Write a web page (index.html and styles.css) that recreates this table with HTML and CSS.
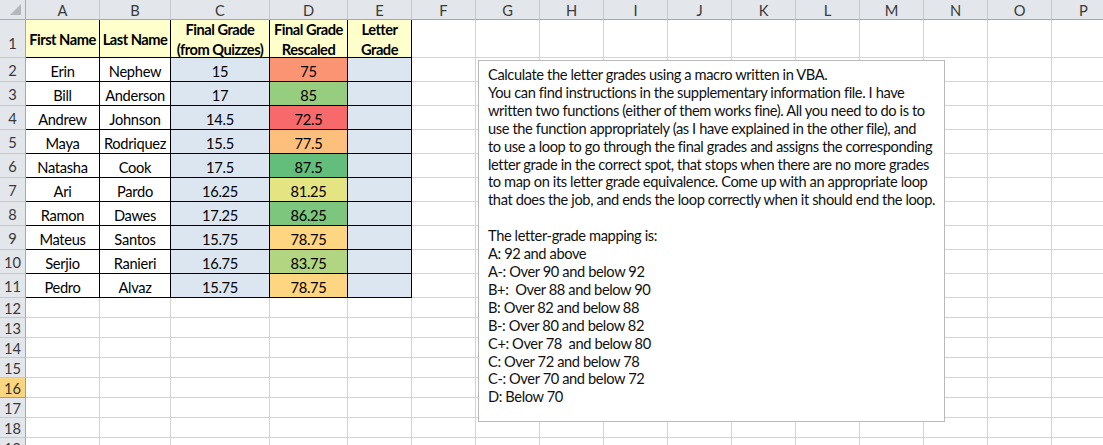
FILE: index.html
```html
<!DOCTYPE html>
<html lang="en">
<head>
<meta charset="utf-8">
<title>Grades</title>
<link rel="stylesheet" href="styles.css">
</head>
<body>
<div class="wrap">
  <div class="sheet">
    <div class="corner"><svg width="14" height="14" viewBox="0 0 14 14"><polygon points="13,1 13,12 2,12" fill="#b4b8bd"/></svg></div>
    <div class="ch">A</div><div class="ch">B</div><div class="ch">C</div><div class="ch">D</div><div class="ch">E</div><div class="ch">F</div><div class="ch">G</div><div class="ch">H</div><div class="ch">I</div><div class="ch">J</div><div class="ch">K</div><div class="ch">L</div><div class="ch">M</div><div class="ch">N</div><div class="ch">O</div><div class="ch">P</div>

    <div class="rh rh-tall">1</div>
    <div class="c hd one">First Name</div>
    <div class="c hd one">Last Name</div>
    <div class="c hd two">Final Grade<br>(from Quizzes)</div>
    <div class="c hd two">Final Grade<br>Rescaled</div>
    <div class="c hd two">Letter<br>Grade</div>
    <div></div><div></div><div></div><div></div><div></div><div></div><div></div><div></div><div></div><div></div><div></div>

    <div class="rh">2</div>
    <div class="c">Erin</div><div class="c">Nephew</div><div class="c blue">15</div><div class="c" style="background:#fa9473">75</div><div class="c blue"></div>
    <div></div><div></div><div></div><div></div><div></div><div></div><div></div><div></div><div></div><div></div><div></div>

    <div class="rh">3</div>
    <div class="c">Bill</div><div class="c">Anderson</div><div class="c blue">17</div><div class="c" style="background:#97cd7e">85</div><div class="c blue"></div>
    <div></div><div></div><div></div><div></div><div></div><div></div><div></div><div></div><div></div><div></div><div></div>

    <div class="rh">4</div>
    <div class="c">Andrew</div><div class="c">Johnson</div><div class="c blue">14.5</div><div class="c" style="background:#f8696b">72.5</div><div class="c blue"></div>
    <div></div><div></div><div></div><div></div><div></div><div></div><div></div><div></div><div></div><div></div><div></div>

    <div class="rh">5</div>
    <div class="c">Maya</div><div class="c">Rodriquez</div><div class="c blue">15.5</div><div class="c" style="background:#fdc07c">77.5</div><div class="c blue"></div>
    <div></div><div></div><div></div><div></div><div></div><div></div><div></div><div></div><div></div><div></div><div></div>

    <div class="rh">6</div>
    <div class="c">Natasha</div><div class="c">Cook</div><div class="c blue">17.5</div><div class="c" style="background:#63be7b">87.5</div><div class="c blue"></div>
    <div></div><div></div><div></div><div></div><div></div><div></div><div></div><div></div><div></div><div></div><div></div>

    <div class="rh">7</div>
    <div class="c">Ari</div><div class="c">Pardo</div><div class="c blue">16.25</div><div class="c" style="background:#e5e483">81.25</div><div class="c blue"></div>
    <div></div><div></div><div></div><div></div><div></div><div></div><div></div><div></div><div></div><div></div><div></div>

    <div class="rh">8</div>
    <div class="c">Ramon</div><div class="c">Dawes</div><div class="c blue">17.25</div><div class="c" style="background:#7dc67d">86.25</div><div class="c blue"></div>
    <div></div><div></div><div></div><div></div><div></div><div></div><div></div><div></div><div></div><div></div><div></div>

    <div class="rh">9</div>
    <div class="c">Mateus</div><div class="c">Santos</div><div class="c blue">15.75</div><div class="c" style="background:#fed580">78.75</div><div class="c blue"></div>
    <div></div><div></div><div></div><div></div><div></div><div></div><div></div><div></div><div></div><div></div><div></div>

    <div class="rh">10</div>
    <div class="c">Serjio</div><div class="c">Ranieri</div><div class="c blue">16.75</div><div class="c" style="background:#b1d580">83.75</div><div class="c blue"></div>
    <div></div><div></div><div></div><div></div><div></div><div></div><div></div><div></div><div></div><div></div><div></div>

    <div class="rh">11</div>
    <div class="c">Pedro</div><div class="c">Alvaz</div><div class="c blue">15.75</div><div class="c" style="background:#fed580">78.75</div><div class="c blue"></div>
    <div></div><div></div><div></div><div></div><div></div><div></div><div></div><div></div><div></div><div></div><div></div>

    <div class="rh">12</div>
    <div></div><div></div><div></div><div></div><div></div><div></div><div></div><div></div><div></div><div></div><div></div><div></div><div></div><div></div><div></div><div></div>
    <div class="rh">13</div>
    <div></div><div></div><div></div><div></div><div></div><div></div><div></div><div></div><div></div><div></div><div></div><div></div><div></div><div></div><div></div><div></div>
    <div class="rh">14</div>
    <div></div><div></div><div></div><div></div><div></div><div></div><div></div><div></div><div></div><div></div><div></div><div></div><div></div><div></div><div></div><div></div>
    <div class="rh">15</div>
    <div></div><div></div><div></div><div></div><div></div><div></div><div></div><div></div><div></div><div></div><div></div><div></div><div></div><div></div><div></div><div></div>
    <div class="rh sel">16</div>
    <div></div><div></div><div></div><div></div><div></div><div></div><div></div><div></div><div></div><div></div><div></div><div></div><div></div><div></div><div></div><div></div>
    <div class="rh">17</div>
    <div></div><div></div><div></div><div></div><div></div><div></div><div></div><div></div><div></div><div></div><div></div><div></div><div></div><div></div><div></div><div></div>
    <div class="rh">18</div>
    <div></div><div></div><div></div><div></div><div></div><div></div><div></div><div></div><div></div><div></div><div></div><div></div><div></div><div></div><div></div><div></div>
    <div class="rh">19</div>
    <div></div><div></div><div></div><div></div><div></div><div></div><div></div><div></div><div></div><div></div><div></div><div></div><div></div><div></div><div></div><div></div>
  </div>

  <div class="note">Calculate the letter grades using a macro written in VBA.<br>You can find instructions in the supplementary information file. I have<br>written two functions (either of them works fine). All you need to do is to<br>use the function appropriately (as I have explained in the other file), and<br>to use a loop to go through the final grades and assigns the corresponding<br>letter grade in the correct spot, that stops when there are no more grades<br>to map on its letter grade equivalence. Come up with an appropriate loop<br>that does the job, and ends the loop correctly when it should end the loop.<br><br>The letter-grade mapping is:<br>A: 92 and above<br>A-: Over 90 and below 92<br>B+:&nbsp; Over 88 and below 90<br>B: Over 82 and below 88<br>B-: Over 80 and below 82<br>C+: Over 78&nbsp; and below 80<br>C: Over 72 and below 78<br>C-: Over 70 and below 72<br>D: Below 70</div>
</div>
</body>
</html>
```

FILE: styles.css
```css
html, body {
  margin: 0;
  padding: 0;
  background: #fff;
}
body {
  font-family: Lato, "Liberation Sans", sans-serif;
  overflow: hidden;
}
.wrap {
  position: relative;
  width: 1103px;
  height: 445px;
  overflow: hidden;
}
.sheet {
  display: grid;
  grid-template-columns: 26px 74px 71px 99px 78px repeat(12, 64px);
  grid-template-rows: 20px 38px repeat(10, 24px) repeat(8, 20px);
  width: 1116px;
}
.sheet > div {
  box-sizing: border-box;
  border-right: 1px solid #d4d4d4;
  border-bottom: 1px solid #d4d4d4;
}
.sheet > .corner {
  background: #e3e6ea;
  border-right-color: #a9adb2;
  border-bottom-color: #a9adb2;
  display: flex;
  align-items: flex-end;
  justify-content: flex-end;
  padding: 0 3px 2px 0;
}
.corner svg { display: block; }
.sheet > .ch {
  background: #e3e6ea;
  border-right-color: #c5c8cd;
  border-bottom-color: #a4a8ad;
  display: flex;
  align-items: center;
  justify-content: center;
  padding-top: 2px;
  font-size: 14.67px;
  color: #3a3a3a;
}
.sheet > .rh {
  background: #e3e6ea;
  border-right-color: #a4a8ad;
  border-bottom-color: #c5c8cd;
  display: flex;
  align-items: center;
  justify-content: center;
  padding-top: 1px;
  font-size: 14.67px;
  color: #3a3a3a;
}
.sheet > .rh-tall {
  align-items: flex-end;
  padding-bottom: 5px;
}
.sheet > .sel {
  background: #f9d67f;
  border-right-color: #c29a48;
  border-bottom-color: #c29a48;
  color: #333;
}
.sheet > .c {
  border-right-color: #000;
  border-bottom-color: #000;
  display: flex;
  align-items: flex-end;
  justify-content: center;
  text-align: center;
  font-size: 14.67px;
  line-height: 18px;
  letter-spacing: -0.3px;
  color: #000;
  white-space: nowrap;
}
.sheet > .blue {
  background: #dce6f1;
}
.sheet > .hd {
  background: #ffffcc;
  font-weight: bold;
  align-items: center;
  letter-spacing: -0.5px;
}
.sheet > .one {
  padding-top: 2px;
}
.sheet > .two {
  line-height: 20px;
  padding-top: 3px;
}
.note {
  position: absolute;
  left: 478px;
  top: 60px;
  width: 467px;
  height: 362px;
  box-sizing: border-box;
  border: 1px solid #b9b9b9;
  background: #fff;
  padding: 5px 0 0 9px;
  font-size: 14.67px;
  line-height: 17.9px;
  letter-spacing: -0.4px;
  color: #111;
  white-space: nowrap;
}
```
